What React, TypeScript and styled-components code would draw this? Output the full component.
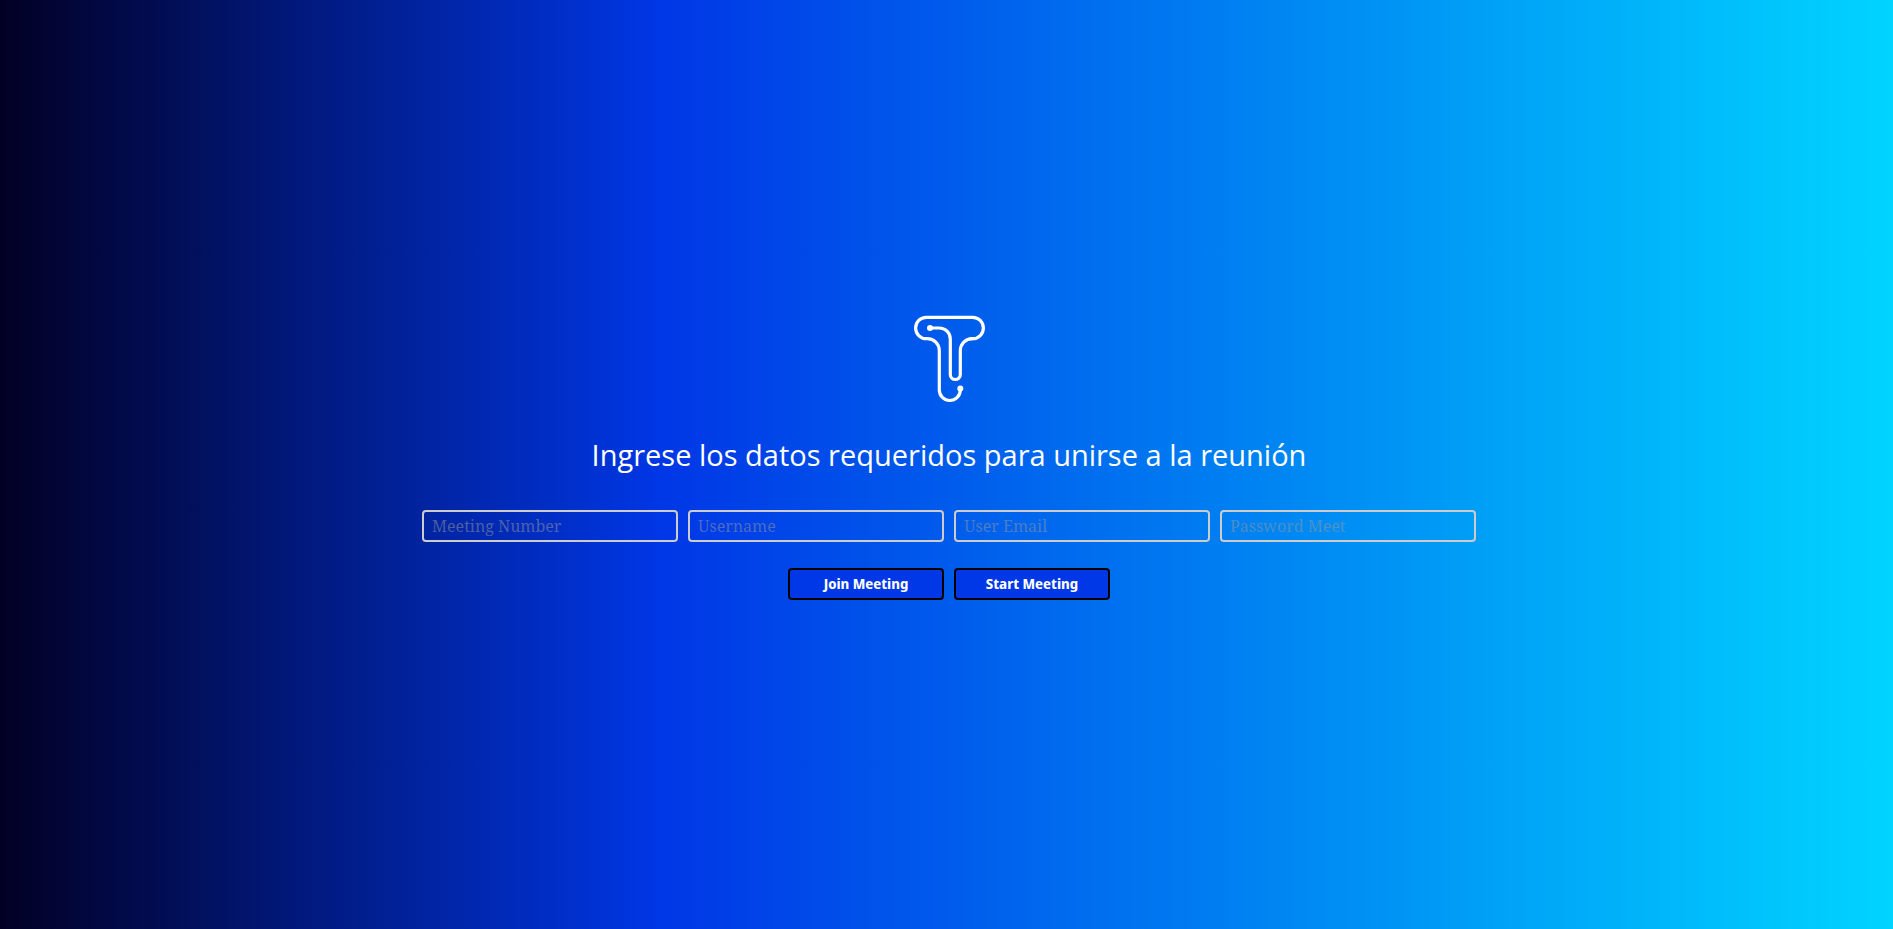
import React from "react";
import styled, { createGlobalStyle } from "styled-components";

const GlobalStyle = createGlobalStyle`
  *, *::before, *::after { box-sizing: border-box; }
  body { margin: 0; }
`;

const Page = styled.main`
  min-height: 100vh;
  padding: 0 0 14px 5px;
  display: flex;
  flex-direction: column;
  align-items: center;
  justify-content: center;
  background: linear-gradient(90deg, #020024 0%, #0037e6 35%, #00d4ff 100%);
  font-family: "Noto Sans Display", "Open Sans", "Noto Sans", sans-serif;
`;

const Logo = styled.svg`
  display: block;
  width: 72px;
  height: 88px;
  overflow: visible;
  fill: none;
  stroke: #fff;
  stroke-width: 3.2;
  stroke-linecap: round;
`;

const Title = styled.h1`
  margin: 30px 0 34px;
  color: #fff;
  font-family: "Open Sans", sans-serif;
  font-size: 29px;
  font-weight: 400;
  line-height: 42px;
  text-align: center;
`;

const Form = styled.form`
  display: flex;
  flex-direction: column;
  align-items: center;
  gap: 26px;
`;

const Row = styled.div`
  display: flex;
  flex-wrap: wrap;
  justify-content: center;
  gap: 10px;
`;

const Field = styled.input`
  width: 256px;
  height: 32px;
  padding: 0 8px;
  border: 2px solid #ccc;
  border-radius: 4px;
  background: transparent;
  color: #fff;
  font-family: "Noto Serif", serif;
  font-size: 16px;

  &::placeholder {
    color: rgba(153, 153, 153, 0.5);
  }
`;

const Button = styled.button`
  width: 156px;
  height: 32px;
  padding: 0;
  border: 2px solid #000;
  border-radius: 4px;
  background: #0037e6;
  color: #fff;
  font-family: inherit;
  font-size: 14px;
  font-weight: 700;
  cursor: pointer;
`;

const fields = [
  { name: "meetingNumber", label: "Meeting Number", type: "text" },
  { name: "username", label: "Username", type: "text" },
  { name: "email", label: "User Email", type: "email" },
  { name: "password", label: "Password Meet", type: "password" },
];

export default function App() {
  return (
    <>
      <GlobalStyle />
      <Page>
        <Logo viewBox="13 15 72 88" aria-hidden="true">
          <path d="M71 37.7h1.7a10.7 10.7 0 0 0 0-21.4H26.3a10.7 10.7 0 0 0 0 21.4h1a12 12 0 0 1 12 12V89a10.5 10.5 0 0 0 21 0v-1.5" />
          <path d="M30 27h9.3a11 11 0 0 1 11 11v35.5a5 5 0 0 0 10 0V49.7a12 12 0 0 1 12-12" />
          <circle cx="30" cy="27" r="3" fill="#fff" stroke="none" />
          <circle cx="60.3" cy="87.5" r="3" fill="#fff" stroke="none" />
        </Logo>
        <Title>Ingrese los datos requeridos para unirse a la reunión</Title>
        <Form onSubmit={(e) => e.preventDefault()}>
          <Row>
            {fields.map((f) => (
              <Field
                key={f.name}
                name={f.name}
                type={f.type}
                placeholder={f.label}
                aria-label={f.label}
              />
            ))}
          </Row>
          <Row>
            <Button type="submit">Join Meeting</Button>
            <Button type="button">Start Meeting</Button>
          </Row>
        </Form>
      </Page>
    </>
  );
}
